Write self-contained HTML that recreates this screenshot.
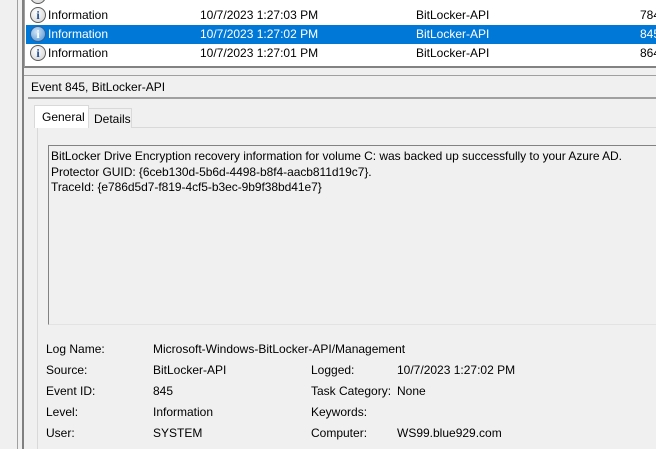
<!DOCTYPE html>
<html><head><style>
*{margin:0;padding:0;box-sizing:border-box}
body{width:656px;height:449px;overflow:hidden;background:#f0f0f0;font-family:"Liberation Sans",sans-serif;font-size:12px;color:#000;position:relative}
.a{position:absolute}
.row{position:absolute;left:26px;width:640px;height:19px;line-height:19px}
.row span{position:absolute;top:0}
.ic{position:absolute;left:4px;top:1px;width:16px;height:16px;border-radius:50%;border:1px solid #5a5a5a;background:radial-gradient(circle at 40% 35%,#fff,#d0d0d0);font:bold 12px "Liberation Serif",serif;color:#1f4f99;text-align:center;line-height:14px}
.sel{background:#0078d7;color:#fff}
.sel .ic{background:radial-gradient(circle at 40% 35%,#cfe4f7,#4a90d0);border-color:#2c5f9a;color:#fff}
.lbl{position:absolute;font-size:12px}
.msg{letter-spacing:-0.05px}
</style></head><body>
<div class="a" style="left:17px;top:0;width:1px;height:449px;background:#a0a0a0"></div>
<div class="a" style="left:22px;top:0;width:2px;height:449px;background:#808080"></div>
<div class="a" style="left:24px;top:0;width:632px;height:68px;background:#fff;border-left:1px solid #a0a0a0;border-bottom:2px solid #828282"></div>
<div class="row" style="top:-13px"><div class="ic">i</div></div>
<div class="row" style="top:6px"><div class="ic">i</div><span style="left:22px">Information</span><span style="left:174px">10/7/2023 1:27:03 PM</span><span style="left:390px">BitLocker-API</span><span style="left:614px">784</span></div>
<div class="row sel" style="top:25px"><div class="ic">i</div><span style="left:22px">Information</span><span style="left:174px">10/7/2023 1:27:02 PM</span><span style="left:390px">BitLocker-API</span><span style="left:614px">845</span></div>
<div class="row" style="top:44px"><div class="ic">i</div><span style="left:22px">Information</span><span style="left:174px">10/7/2023 1:27:01 PM</span><span style="left:390px">BitLocker-API</span><span style="left:614px">864</span></div>
<div class="a" style="left:24px;top:75px;width:632px;height:1px;background:#a0a0a0"></div>
<div class="a" style="left:31px;top:80px">Event 845, BitLocker-API</div>
<div class="a" style="left:28px;top:97px;width:628px;height:2px;background:#a0a0a0"></div>
<div class="a" style="left:37px;top:127px;width:619px;height:322px;border-left:1px solid #d9d9d9;border-top:1px solid #d9d9d9"></div>
<div class="a" style="left:88px;top:108px;width:44px;height:20px;border:1px solid #d9d9d9;border-bottom:none;background:#f0f0f0;padding:3px 0 0 5px">Details</div>
<div class="a" style="left:34px;top:105px;width:55px;height:23px;border:1px solid #d9d9d9;border-bottom:none;background:#fff;padding:4px 0 0 7px">General</div>
<div class="a msg" style="left:48px;top:145px;width:608px;height:180px;border-left:1px solid #828282;border-top:1px solid #828282;border-bottom:1px solid #e3e3e3;padding:3px 0 0 2px;line-height:15.5px">BitLocker Drive Encryption recovery information for volume C: was backed up successfully to your Azure AD.<br>Protector GUID: {6ceb130d-5b6d-4498-b8f4-aacb811d19c7}.<br>TraceId: {e786d5d7-f819-4cf5-b3ec-9b9f38bd41e7}</div>
<div class="lbl" style="left:46px;top:342px">Log Name:</div>
<div class="lbl" style="left:153px;top:342px">Microsoft-Windows-BitLocker-API/Management</div>
<div class="lbl" style="left:46px;top:363px">Source:</div>
<div class="lbl" style="left:153px;top:363px">BitLocker-API</div>
<div class="lbl" style="left:311px;top:363px">Logged:</div>
<div class="lbl" style="left:397px;top:363px">10/7/2023 1:27:02 PM</div>
<div class="lbl" style="left:46px;top:384px">Event ID:</div>
<div class="lbl" style="left:153px;top:384px">845</div>
<div class="lbl" style="left:311px;top:384px">Task Category:</div>
<div class="lbl" style="left:397px;top:384px">None</div>
<div class="lbl" style="left:46px;top:405px">Level:</div>
<div class="lbl" style="left:153px;top:405px">Information</div>
<div class="lbl" style="left:311px;top:405px">Keywords:</div>
<div class="lbl" style="left:46px;top:426px">User:</div>
<div class="lbl" style="left:153px;top:426px">SYSTEM</div>
<div class="lbl" style="left:311px;top:426px">Computer:</div>
<div class="lbl" style="left:397px;top:426px">WS99.blue929.com</div>
</body></html>
